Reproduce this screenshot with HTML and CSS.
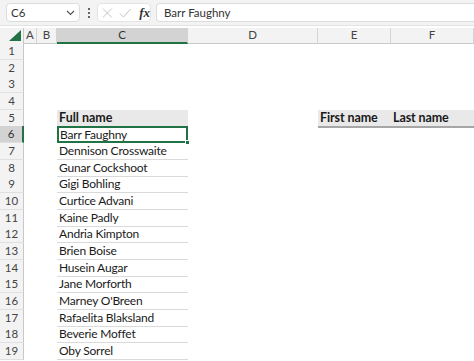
FILE: index.html
```html
<!DOCTYPE html>
<html>
<head>
<meta charset="utf-8">
<link rel="stylesheet" href="styles.css">
</head>
<body>
<div class="app">
  <div class="fbar">
    <div class="namebox"><span>C6</span>
      <svg class="chev" width="9" height="6" viewBox="0 0 9 6"><path d="M1 1 L4.5 4.5 L8 1" fill="none" stroke="#555" stroke-width="1.2"/></svg>
    </div>
    <div class="dots"><i></i><i></i><i></i></div>
    <div class="btnbox">
      <svg width="12" height="12" viewBox="0 0 12 12"><path d="M1 1 L11 11 M11 1 L1 11" stroke="#c4c4c4" stroke-width="1.1"/></svg>
      <svg width="14" height="12" viewBox="0 0 14 12"><path d="M1 6.5 L5 10.5 L13 1.5" fill="none" stroke="#c4c4c4" stroke-width="1.1"/></svg>
      <span class="fx">fx</span>
    </div>
    <div class="finput">Barr Faughny</div>
  </div>
  <div class="sheet">
    <div class="row hdr">
      <div class="corner"><svg width="12" height="11" viewBox="0 0 12 11"><path d="M12 0 L12 11 L0 11 Z" fill="#217346"/></svg></div>
      <div class="ch">A</div><div class="ch">B</div><div class="ch sel">C</div><div class="ch">D</div><div class="ch">E</div><div class="ch">F</div>
    </div>
    <div class="row"><div class="rh">1</div></div>
    <div class="row"><div class="rh">2</div></div>
    <div class="row"><div class="rh">3</div></div>
    <div class="row"><div class="rh">4</div></div>
    <div class="row"><div class="rh">5</div><div class="c colc thead">Full name</div><div class="c cole thead2">First name</div><div class="c colf thead2">Last name</div></div>
    <div class="row"><div class="rh rsel">6</div><div class="c colc active">Barr Faughny<span class="handle"></span></div></div>
    <div class="row"><div class="rh">7</div><div class="c colc tb">Dennison Crosswaite</div></div>
    <div class="row"><div class="rh">8</div><div class="c colc tb">Gunar Cockshoot</div></div>
    <div class="row"><div class="rh">9</div><div class="c colc tb">Gigi Bohling</div></div>
    <div class="row"><div class="rh">10</div><div class="c colc tb">Curtice Advani</div></div>
    <div class="row"><div class="rh">11</div><div class="c colc tb">Kaine Padly</div></div>
    <div class="row"><div class="rh">12</div><div class="c colc tb">Andria Kimpton</div></div>
    <div class="row"><div class="rh">13</div><div class="c colc tb">Brien Boise</div></div>
    <div class="row"><div class="rh">14</div><div class="c colc tb">Husein Augar</div></div>
    <div class="row"><div class="rh">15</div><div class="c colc tb">Jane Morforth</div></div>
    <div class="row"><div class="rh">16</div><div class="c colc tb">Marney O'Breen</div></div>
    <div class="row"><div class="rh">17</div><div class="c colc tb">Rafaelita Blaksland</div></div>
    <div class="row"><div class="rh">18</div><div class="c colc tb">Beverie Moffet</div></div>
    <div class="row"><div class="rh">19</div><div class="c colc tb">Oby Sorrel</div></div>
  </div>
</div>
</body>
</html>
```
FILE: styles.css
```css
* { box-sizing: border-box; }
html, body { margin: 0; padding: 0; background: #fff; }
body { width: 474px; height: 361px; overflow: hidden; font-family: Lato, "Open Sans", sans-serif; color: #1a1a1a; }
.app { display: flex; flex-direction: column; }

.fbar { height: 26px; background: #f3f3f3; display: flex; align-items: center; padding: 0 0 0 6px; border-bottom: 1px solid #e2e2e2; }
.namebox { width: 74px; height: 19px; background: #fff; border: 1px solid #dcdcdc; border-radius: 4px; display: flex; align-items: center; justify-content: space-between; padding: 0 4px 0 4px; font-size: 11.5px; color: #333; }
.chev { margin-top: 1px; }
.dots { width: 17px; display: flex; flex-direction: column; align-items: center; gap: 2px; }
.dots i { width: 2px; height: 2px; background: #666; display: block; }
.btnbox { width: 54px; height: 19px; background: #fff; border: 1px solid #e4e4e4; border-radius: 4px; display: flex; align-items: center; gap: 6px; padding-left: 4px; }
.fx { font-family: "Liberation Serif", serif; font-style: italic; font-weight: bold; font-size: 13px; color: #333; margin-left: 2px; }
.finput { flex: 1; height: 19px; margin-left: 5px; background: #fff; border: 1px solid #dcdcdc; border-right: none; border-radius: 4px 0 0 4px; font-size: 11.5px; line-height: 17px; padding-left: 7px; color: #333; }

.sheet { margin-top: 2px; }
.row { display: grid; grid-template-columns: 24px 13px 20px 131px 130px 73px 83px; height: 16.67px; font-size: 12px; }
.row.hdr { height: 15px; }
.corner { background: #f3f3f3; display: flex; align-items: flex-end; justify-content: flex-end; padding: 0 2px 2px 0; border-bottom: 1px solid #c8c8c8; border-right: 1px solid #c8c8c8; }
.ch { background: #f3f3f3; text-align: center; font-size: 11.5px; line-height: 14px; color: #444; border-right: 1px solid #d4d4d4; border-bottom: 1px solid #c8c8c8; }
.ch.sel { background: #d3d3d3; border-bottom: 2px solid #217346; color: #333; }
.rh { grid-column: 1; background: #f3f3f3; text-align: center; font-size: 11.5px; line-height: 16px; color: #444; border-right: 1px solid #c8c8c8; border-bottom: 1px solid #e0e0e0; }
.rh.rsel { background: #d3d3d3; border-right: 2px solid #217346; color: #333; }
.c { line-height: 16px; padding-left: 2px; white-space: nowrap; position: relative; letter-spacing: -0.2px; }
.colc { grid-column: 4; }
.cole { grid-column: 6; }
.colf { grid-column: 7; }
.thead { background: #e9e9e9; font-weight: bold; border-bottom: 1px solid #bdbdbd; font-size: 12.5px; letter-spacing: 0; }
.thead2 { background: #e9e9e9; font-weight: bold; border-bottom: 2px solid #a6a6a6; font-size: 12.5px; letter-spacing: -0.1px; }
.tb { border-bottom: 1px solid #dadada; }
.active { border: 2px solid #217346; line-height: 13px; padding-left: 1px; }
.handle { position: absolute; right: -4px; bottom: -4px; width: 5px; height: 5px; background: #217346; border: 1px solid #fff; }
```
